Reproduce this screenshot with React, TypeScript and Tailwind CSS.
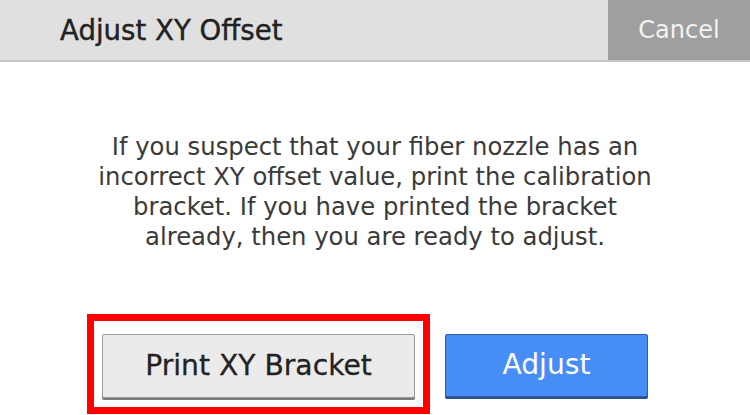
import React from "react";

export default function App() {
  const font = { fontFamily: '"DejaVu Sans", "Liberation Sans", sans-serif' };
  return (
    <div className="w-[750px] h-[415px] overflow-hidden bg-white flex flex-col" style={font}>
      <div className="flex h-[62px] shrink-0 bg-[#e0e0e0] border-b-2 border-[#c6c6c6]">
        <div className="flex-1 flex items-center pl-[60px] pt-[2px] text-[27.6px] text-[#222222] [-webkit-text-stroke:0.4px_#222222]">
          Adjust XY Offset
        </div>
        <div className="w-[142px] flex items-center justify-center bg-[#9f9f9f] text-[24px] text-[#f2f2f2]">
          Cancel
        </div>
      </div>
      <div className="pt-[70px] text-center text-[24.3px] leading-[30px] text-[#3a3a3a]">
        If you suspect that your fiber nozzle has an
        <br />
        incorrect XY offset value, print the calibration
        <br />
        bracket. If you have printed the bracket
        <br />
        already, then you are ready to adjust.
      </div>
      <div className="flex items-start pl-[87px] mt-[62px] gap-[15px]">
        <div className="w-[343px] border-[7px] border-[#ff0000] px-[8px] pt-[13px] pb-[9px]">
          <div className="h-[64px] flex items-center justify-center bg-[#ebebeb] border border-[#9a9a9a] rounded-[2px] shadow-[0_2px_0_#7a7a7a] text-[28.2px] text-[#222222] [-webkit-text-stroke:0.3px_#222222]">
            Print XY Bracket
          </div>
        </div>
        <div className="mt-[20px] w-[203px] h-[63px] flex items-center justify-center bg-[#468df6] border border-[#2c5ca6] rounded-[2px] shadow-[0_2px_0_#27508f] text-[28.2px] text-white">
          Adjust
        </div>
      </div>
    </div>
  );
}
